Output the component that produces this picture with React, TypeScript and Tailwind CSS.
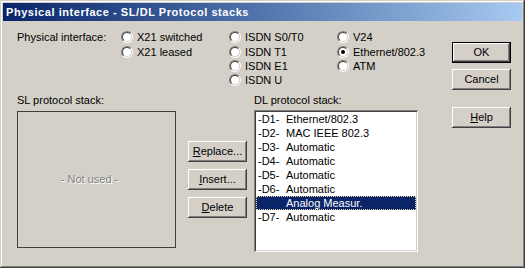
import React from "react";

const raised =
  "shadow-[inset_-1px_-1px_#404040,inset_1px_1px_#ffffff,inset_-2px_-2px_#808080,inset_2px_2px_#d4d0c8]";

function Radio({ label, checked = false }: { label: string; checked?: boolean }) {
  return (
    <div className="flex h-[14px] items-center gap-[4px]">
      <div className="flex h-[12px] w-[12px] shrink-0 items-center justify-center rounded-full border border-t-[#808080] border-l-[#808080] border-b-white border-r-white">
        <div className="flex h-[10px] w-[10px] items-center justify-center rounded-full border border-t-[#404040] border-l-[#404040] border-b-[#d4d0c8] border-r-[#d4d0c8] bg-white">
          {checked && <div className="h-[4px] w-[4px] rounded-full bg-black" />}
        </div>
      </div>
      <span className="leading-[14px]">{label}</span>
    </div>
  );
}

function Btn({
  children,
  isDefault = false,
  className = "",
}: {
  children: React.ReactNode;
  isDefault?: boolean;
  className?: string;
}) {
  if (isDefault) {
    return (
      <div className={`h-[21px] w-[59px] border border-black ${className}`}>
        <div className={`flex h-full w-full items-center justify-center ${raised}`}>
          {children}
        </div>
      </div>
    );
  }
  return (
    <div className={`flex h-[21px] w-[59px] items-center justify-center ${raised} ${className}`}>
      {children}
    </div>
  );
}

const items: [string, string, boolean][] = [
  ["-D1-", "Ethernet/802.3", false],
  ["-D2-", "MAC IEEE 802.3", false],
  ["-D3-", "Automatic", false],
  ["-D4-", "Automatic", false],
  ["-D5-", "Automatic", false],
  ["-D6-", "Automatic", false],
  ["", "Analog Measur.", true],
  ["-D7-", "Automatic", false],
];

export default function App() {
  return (
    <div className="h-[268px] w-[525px] bg-[#d4d0c8] p-[3px] font-['Liberation_Sans',Arial,sans-serif] text-[11px] text-black shadow-[inset_-1px_-1px_#404040,inset_1px_1px_#d4d0c8,inset_-2px_-2px_#808080,inset_2px_2px_#ffffff]">
      {/* Title bar */}
      <div className="flex h-[18px] items-center bg-gradient-to-r from-[#0a246a] to-[#a6caf0] pl-[3px] text-[11px] font-bold leading-[18px] text-white">
        <span className="tracking-[0.55px]">Physical interface - SL/DL Protocol stacks</span>
      </div>

      {/* Body */}
      <div className="flex pt-[9px] pl-[14px]">
        <div className="flex w-[435px] flex-col">
          {/* Physical interface radios */}
          <div className="flex">
            <div className="w-[104px] leading-[14px]">Physical interface:</div>
            <div className="flex w-[108px] flex-col">
              <Radio label="X21 switched" />
              <div className="mt-[1px]">
                <Radio label="X21 leased" />
              </div>
            </div>
            <div className="flex w-[108px] flex-col">
              <Radio label="ISDN S0/T0" />
              <div className="mt-[1px]">
                <Radio label="ISDN T1" />
              </div>
              <Radio label="ISDN E1" />
              <Radio label="ISDN U" />
            </div>
            <div className="flex flex-col">
              <Radio label="V24" />
              <div className="mt-[1px]">
                <Radio label="Ethernet/802.3" checked />
              </div>
              <Radio label="ATM" />
            </div>
          </div>

          {/* Stacks */}
          <div className="mt-[7px] flex">
            {/* SL */}
            <div className="flex w-[159px] flex-col">
              <div className="h-[13px] leading-[13px]">SL protocol stack:</div>
              <div className="mt-[4px] flex h-[137px] items-center justify-center border border-[#404040] pr-[14px]">
                <span className="text-[#808080] [text-shadow:1px_1px_0_#ffffff]">- Not used -</span>
              </div>
            </div>

            {/* Buttons */}
            <div className="ml-[12px] flex flex-col pt-[47px]">
              <Btn>
                <span>
                  <span className="underline underline-offset-[1px]">R</span>eplace...
                </span>
              </Btn>
              <Btn className="mt-[7px]">
                <span>
                  <span className="underline underline-offset-[1px]">I</span>nsert...
                </span>
              </Btn>
              <Btn className="mt-[7px]">
                <span>
                  <span className="underline underline-offset-[1px]">D</span>elete
                </span>
              </Btn>
            </div>

            {/* DL */}
            <div className="ml-[7px] flex flex-col">
              <div className="h-[13px] leading-[13px]">DL protocol stack:</div>
              <div className="mt-[3px] h-[142px] w-[164px] bg-white p-[2px] shadow-[inset_1px_1px_#808080,inset_-1px_-1px_#ffffff,inset_2px_2px_#404040,inset_-2px_-2px_#d4d0c8]">
                {items.map(([a, b, sel], i) => (
                  <div
                    key={i}
                    className={
                      sel
                        ? "flex h-[14px] items-center border border-dotted border-[#e8dca0] bg-[#0a246a] pl-[1px] leading-[12px] text-white"
                        : "flex h-[14px] items-center pl-[2px] leading-[14px]"
                    }
                  >
                    <span className="w-[28px]">{a}</span>
                    <span>{b}</span>
                  </div>
                ))}
              </div>
            </div>
          </div>
        </div>

        {/* Right buttons */}
        <div className="flex flex-col pt-[12px]">
          <Btn isDefault>OK</Btn>
          <Btn className="mt-[6px]">Cancel</Btn>
          <Btn className="mt-[17px]">
            <span>
              <span className="underline underline-offset-[1px]">H</span>elp
            </span>
          </Btn>
        </div>
      </div>
    </div>
  );
}
